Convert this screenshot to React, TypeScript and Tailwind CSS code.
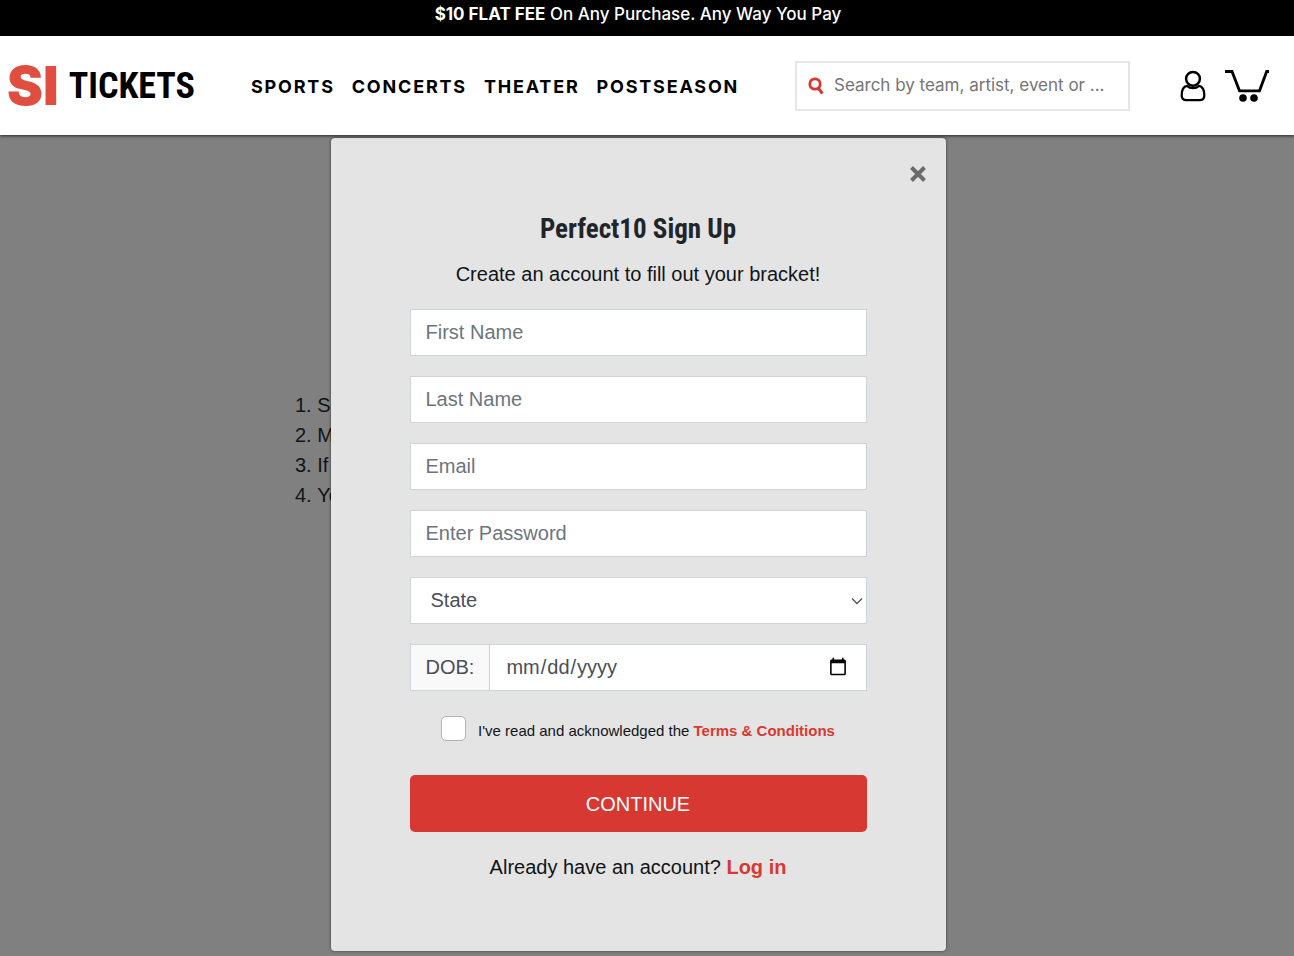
import { useState } from 'react'

const NAV_LINKS = ['Sports', 'Concerts', 'Theater', 'Postseason']

const TEXT_FIELDS = [
  { id: 'firstName', label: 'First Name', type: 'text' },
  { id: 'lastName', label: 'Last Name', type: 'text' },
  { id: 'email', label: 'Email', type: 'email' },
  { id: 'password', label: 'Enter Password', type: 'password' },
]

const STEPS = ['Sign up', 'Make your picks', 'If you win', 'You get paid']

const STATES = ['California', 'Florida', 'New York', 'Texas']

function SearchIcon() {
  return (
    <svg viewBox="0 0 16 18" className="h-[18px] w-4 shrink-0" fill="none" stroke="#dc352d">
      <circle cx="7" cy="7" r="5.2" strokeWidth="2.8" />
      <path d="M10.2 11 14.4 16.6" strokeWidth="3" />
    </svg>
  )
}

function UserIcon() {
  return (
    <svg viewBox="0 0 26 32" className="h-8 w-[26px]" fill="none" stroke="#000" strokeWidth="2.5">
      <circle cx="13" cy="8.8" r="6.9" />
      <path d="M7 15.9C3.4 16.6 1.7 20 1.7 25.2 1.7 28.8 3.6 30.2 6.4 30.2H19.6C22.4 30.2 24.3 28.8 24.3 25.2 24.3 20 22.6 16.6 19 15.9 17.4 17.4 15.4 18.2 13 18.2S8.6 17.4 7 15.9Z" strokeWidth="2.3" />
    </svg>
  )
}

function CartIcon() {
  return (
    <svg viewBox="0 0 44 32" className="h-8 w-11" fill="none">
      <path d="M0 1.5H7L14.5 20.8H34.5L41.7 1.5H44" stroke="#000" strokeWidth="2.8" />
      <circle cx="18" cy="28" r="3.8" fill="#000" />
      <circle cx="29" cy="28" r="3.8" fill="#000" />
    </svg>
  )
}

function Header() {
  return (
    <header className="relative z-20 shadow-[0_1px_3px_rgba(0,0,0,0.7)]">
      <div className="h-9 bg-black pr-[18px] text-center font-[Inter,sans-serif] text-[17px] leading-7 font-medium text-white">
        <strong className="font-bold">$10 FLAT FEE</strong> On Any Purchase. Any Way You Pay
      </div>

      <div className="flex h-[99px] items-center bg-white pr-[25px] pl-[7px] font-[Inter,sans-serif]">
        <a href="/" aria-label="SI Tickets" className="flex w-[188px] shrink-0 items-center justify-between">
          <span className="text-[54px] leading-none font-black text-[#e04e3f]">SI</span>
          <span className="font-['Roboto_Condensed',Roboto,sans-serif] text-4xl leading-none font-bold text-black">TICKETS</span>
        </a>

        <nav className="mt-0.5 ml-14 flex gap-[17px]">
          {NAV_LINKS.map(link => (
            <a key={link} href={`/${link.toLowerCase()}`} className="text-lg font-bold tracking-widest text-black uppercase">
              {link}
            </a>
          ))}
        </nav>

        <label className="ml-auto flex h-[50px] w-[335px] items-center gap-2.5 border-2 border-[#e6e6e6] pr-1 pl-[11px]">
          <SearchIcon />
          <input
            type="search"
            aria-label="Search"
            placeholder="Search by team, artist, event or venue"
            className="min-w-0 flex-1 text-[17px] text-ellipsis outline-none placeholder:text-[#757575]"
          />
        </label>

        <div className="ml-[50px] flex items-center gap-[19px]">
          <a href="/account" aria-label="Account"><UserIcon /></a>
          <a href="/cart" aria-label="Cart"><CartIcon /></a>
        </div>
      </div>
    </header>
  )
}

function SignUpModal() {
  const [accepted, setAccepted] = useState(false)

  return (
    <div
      role="dialog"
      aria-labelledby="signup-title"
      className="relative w-full max-w-[615px] rounded-sm bg-[#e4e4e4] px-[79px] pt-[73px] pb-[69px] shadow-[0_0_3px_rgba(0,0,0,0.6)]"
    >
      <button type="button" aria-label="Close" className="absolute top-7 right-5">
        <svg viewBox="0 0 16 16" className="size-4" stroke="#6b6b6b" strokeWidth="4">
          <path d="M1.5 1.5 14.5 14.5M14.5 1.5 1.5 14.5" />
        </svg>
      </button>

      <h1 id="signup-title" className="text-center font-['Roboto_Condensed',Roboto,sans-serif] text-[27px] leading-9 font-bold text-[#212529]">
        Perfect10 Sign Up
      </h1>
      <p className="mt-3 text-center leading-[30px]">Create an account to fill out your bracket!</p>

      <form className="mt-5 flex flex-col gap-5" onSubmit={e => e.preventDefault()}>
        {TEXT_FIELDS.map(({ id, label, type }) => (
          <input
            key={id}
            id={id}
            type={type}
            aria-label={label}
            placeholder={label}
            className="h-[47px] border border-[#ced4da] bg-white px-[15px] placeholder:text-[#6c757d]"
          />
        ))}

        <div className="relative">
          <select aria-label="State" className="block h-[47px] w-full appearance-none border border-[#ced4da] bg-white px-5 pb-0.5 text-[#495057]">
            <option>State</option>
            {STATES.map(state => <option key={state}>{state}</option>)}
          </select>
          <svg viewBox="0 0 12 8" className="pointer-events-none absolute top-5 right-1 h-2 w-3" fill="none" stroke="#555" strokeWidth="1.3">
            <path d="M1 1.5 6 6.5 11 1.5" />
          </svg>
        </div>

        <div className="flex h-[47px] border border-[#ced4da] text-[#495057]">
          <label htmlFor="dob" className="flex items-center border-r border-[#ced4da] bg-[#f9f9f9] px-[15px] pb-0.5">DOB:</label>
          <input id="dob" type="date" className="min-w-0 flex-1 bg-white pr-4 pb-0.5 pl-[15px]" />
        </div>

        <div className="mt-0.5 flex items-center justify-center gap-3 text-[15px] leading-6">
          <input
            id="terms"
            type="checkbox"
            checked={accepted}
            onChange={e => setAccepted(e.target.checked)}
            className="size-[25px] appearance-none rounded-[5px] border border-[#adb5bd] bg-white checked:bg-[#d93831]"
          />
          <div className="pt-1.5">
            <label htmlFor="terms">I've read and acknowledged the </label>
            <a href="/terms" className="font-bold text-[#d93831]">Terms &amp; Conditions</a>
          </div>
        </div>

        <button type="submit" className="mt-3 h-[57px] rounded-[5px] bg-[#d73831] text-white">
          CONTINUE
        </button>
      </form>

      <p className="mt-5 text-center leading-[30px]">
        Already have an account? <a href="/login" className="font-bold text-[#d93831]">Log in</a>
      </p>
    </div>
  )
}

export default function App() {
  return (
    <div className="flex min-h-screen flex-col bg-[#808080] font-['Liberation_Sans',sans-serif] text-xl text-[#111418]">
      <Header />

      <main className="relative flex-1 overflow-hidden">
        <ol className="mx-auto w-full max-w-[704px] list-inside list-decimal pt-[255px] leading-[30px]">
          {STEPS.map(step => <li key={step}>{step}</li>)}
        </ol>

        <div className="absolute inset-x-0 top-[3px] flex justify-center pr-[18px]">
          <SignUpModal />
        </div>
      </main>
    </div>
  )
}
